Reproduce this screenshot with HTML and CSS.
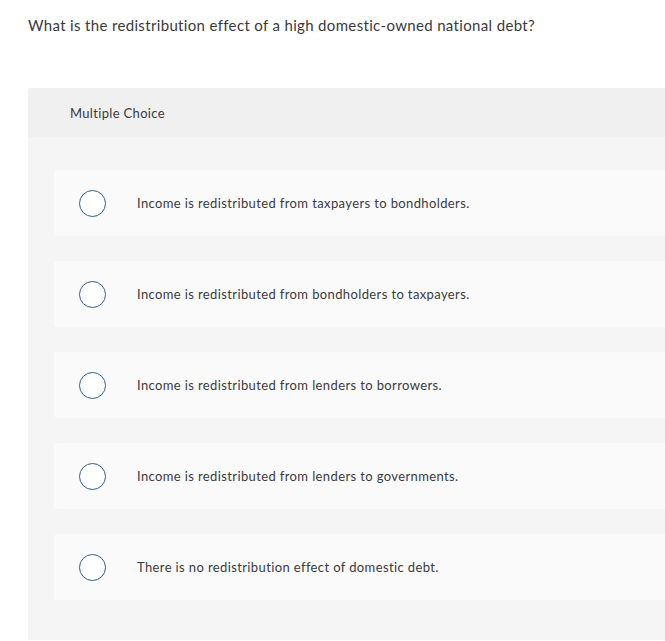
FILE: index.html
```html
<!DOCTYPE html>
<html>
<head>
<meta charset="utf-8">
<link rel="stylesheet" href="styles.css">
</head>
<body>
<div class="page">
  <p class="question">What is the redistribution effect of a high domestic-owned national debt?</p>
  <div class="panel">
    <div class="panel-head">Multiple Choice</div>
    <div class="panel-body">
      <div class="option"><span class="radio"></span><span class="label">Income is redistributed from taxpayers to bondholders.</span></div>
      <div class="option"><span class="radio"></span><span class="label">Income is redistributed from bondholders to taxpayers.</span></div>
      <div class="option"><span class="radio"></span><span class="label">Income is redistributed from lenders to borrowers.</span></div>
      <div class="option"><span class="radio"></span><span class="label">Income is redistributed from lenders to governments.</span></div>
      <div class="option"><span class="radio"></span><span class="label">There is no redistribution effect of domestic debt.</span></div>
    </div>
  </div>
</div>
</body>
</html>
```

FILE: styles.css
```css
html, body {
  margin: 0;
  padding: 0;
  background: #ffffff;
  overflow: hidden;
}
body {
  font-family: Lato, "Open Sans", sans-serif;
  color: #333333;
}
.page {
  padding: 15px 0 0 28px;
}
.question {
  margin: 0;
  font-size: 15px;
  line-height: 20px;
  height: 73px;
  letter-spacing: 0.34px;
  color: #3a3a3a;
}
.panel {
  border-radius: 3px 0 0 0;
  overflow: hidden;
  background: #f5f5f5;
}
.panel-head {
  background: #f0f0f0;
  height: 49px;
  box-sizing: border-box;
  padding: 16px 0 0 42px;
  font-size: 13px;
  line-height: 18px;
  letter-spacing: 0.33px;
  color: #3a3a3a;
}
.panel-body {
  padding: 33px 0 40px 26px;
  display: flex;
  flex-direction: column;
  gap: 25px;
}
.option {
  background: #fafafa;
  height: 66px;
  border-radius: 3px 0 0 3px;
  display: flex;
  align-items: center;
  padding-left: 25px;
}
.radio {
  width: 25px;
  height: 25px;
  border: 1.5px solid #2e5f92;
  border-radius: 50%;
  background: #ffffff;
  flex: none;
}
.label {
  margin-left: 31px;
  font-size: 13px;
  letter-spacing: 0.38px;
  color: #3a3a3a;
}
```
